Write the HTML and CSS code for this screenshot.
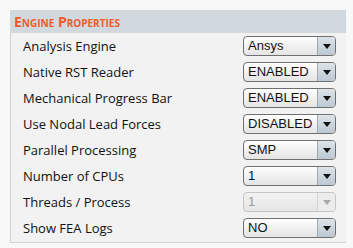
FILE: index.html
```html
<!DOCTYPE html>
<html lang="en">
<head>
    <meta charset="UTF-8">
    <title>Engine Properties</title>
    <link rel="stylesheet" href="styles.css">
</head>
<body>
    <div class="panel">
        <div class="panel-header">Engine Properties</div>
        <div class="panel-body">
            <div class="row">
                <span class="label">Analysis Engine</span>
                <div class="select"><span class="value">Ansys</span><span class="arrow"></span></div>
            </div>
            <div class="row">
                <span class="label">Native RST Reader</span>
                <div class="select"><span class="value">ENABLED</span><span class="arrow"></span></div>
            </div>
            <div class="row">
                <span class="label">Mechanical Progress Bar</span>
                <div class="select"><span class="value">ENABLED</span><span class="arrow"></span></div>
            </div>
            <div class="row">
                <span class="label">Use Nodal Lead Forces</span>
                <div class="select"><span class="value">DISABLED</span><span class="arrow"></span></div>
            </div>
            <div class="row">
                <span class="label">Parallel Processing</span>
                <div class="select"><span class="value">SMP</span><span class="arrow"></span></div>
            </div>
            <div class="row">
                <span class="label">Number of CPUs</span>
                <div class="select"><span class="value">1</span><span class="arrow"></span></div>
            </div>
            <div class="row">
                <span class="label">Threads / Process</span>
                <div class="select disabled"><span class="value">1</span><span class="arrow"></span></div>
            </div>
            <div class="row">
                <span class="label">Show FEA Logs</span>
                <div class="select"><span class="value">NO</span><span class="arrow"></span></div>
            </div>
        </div>
    </div>
</body>
</html>
```

FILE: styles.css
```css
body {
    margin: 0;
    padding: 10px 7px 0 10px;
    background-color: #f8f8f8;
    font-family: 'Open Sans', sans-serif;
    color: #111;
}
.panel {
    width: 336px;
}
.panel-header {
    height: 23px;
    line-height: 23px;
    background-color: #d1d9de;
    color: #f2592b;
    font-weight: bold;
    font-size: 14px;
    font-variant: small-caps;
    padding-left: 4px;
}
.panel-body {
    background-color: #f2f2f2;
    border-left: 1px solid #d4d4d4;
    border-bottom: 1px solid #d4d4d4;
    padding: 0 10px 1px 12px;
}
.row {
    height: 26px;
    display: flex;
    align-items: center;
    justify-content: space-between;
}
.label {
    font-size: 13px;
}
.select {
    width: 91px;
    height: 18px;
    border: 1px solid #707070;
    border-radius: 4px;
    display: flex;
    background: linear-gradient(#ffffff, #e4e4e4);
    overflow: hidden;
}
.value {
    flex: 1;
    font-family: 'Liberation Sans', sans-serif;
    font-size: 13px;
    line-height: 18px;
    padding-left: 4px;
}
.arrow {
    width: 17px;
    border-left: 1px solid #a0a8b0;
    background: linear-gradient(#dde4ea, #bcc8d3);
    display: flex;
    align-items: center;
    justify-content: center;
}
.arrow::after {
    content: "";
    border-left: 4px solid transparent;
    border-right: 4px solid transparent;
    border-top: 5px solid #111;
}
.select.disabled {
    border-color: #c4c4c4;
    background: linear-gradient(#f2f2f2, #e6e6e6);
}
.select.disabled .value {
    color: #9a9a9a;
}
.select.disabled .arrow {
    border-left-color: #d4d4d4;
    background: #ececec;
}
.select.disabled .arrow::after {
    border-top-color: #a8a8a8;
}
```
